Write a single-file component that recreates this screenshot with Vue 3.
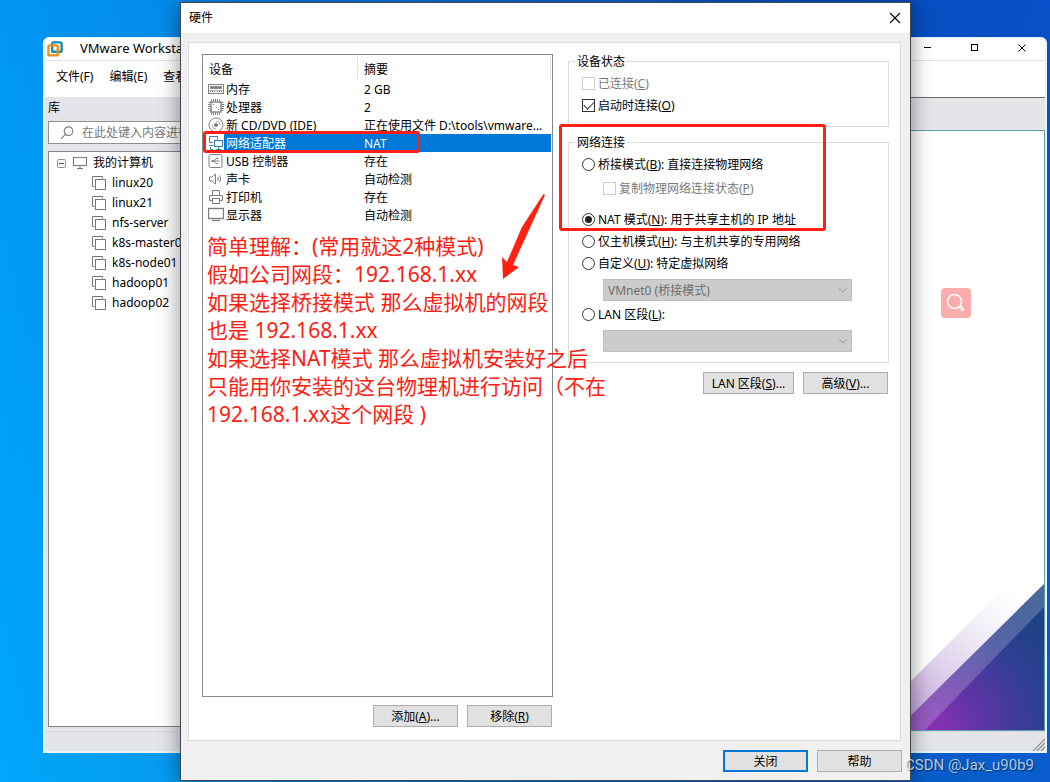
<script setup>
    import { ref } from 'vue';

    const menus = ref(['文件(F)', '编辑(E)', '查看(V)']);

    const machines = ref(['linux20', 'linux21', 'nfs-server', 'k8s-master01', 'k8s-node01', 'hadoop01', 'hadoop02']);

    const devices = ref([
        { icon: 'memory', name: '内存', summary: '2 GB' },
        { icon: 'cpu', name: '处理器', summary: '2' },
        { icon: 'disc', name: '新 CD/DVD (IDE)', summary: '正在使用文件 D:\\tools\\vmware...' },
        { icon: 'network', name: '网络适配器', summary: 'NAT' },
        { icon: 'usb', name: 'USB 控制器', summary: '存在' },
        { icon: 'sound', name: '声卡', summary: '自动检测' },
        { icon: 'printer', name: '打印机', summary: '存在' },
        { icon: 'display', name: '显示器', summary: '自动检测' },
    ]);
    const selected = ref('network');

    const connected = ref(false);
    const connectAtStart = ref(true);
    const replicate = ref(false);
    const mode = ref('nat');

    const notes = ref([
        '简单理解：(常用就这2种模式)',
        '假如公司网段：192.168.1.xx',
        '如果选择桥接模式 那么虚拟机的网段',
        '也是 192.168.1.xx',
        '如果选择NAT模式 那么虚拟机安装好之后',
        '只能用你安装的这台物理机进行访问（不在',
        '192.168.1.xx这个网段 )',
    ]);
</script>


<template>
    <div class="desktop">
        <section class="window">
            <header class="titlebar">
                <svg class="logo" width="16" height="16" viewBox="0 0 16 16" fill="none" stroke-width="2.4">
                    <rect x="5.2" y="1.4" width="9.4" height="9.4" rx="1.4" stroke="#0f8fb5" />
                    <rect x="1.4" y="4.4" width="9.4" height="10" rx="1.4" stroke="#f08c14" />
                    <path d="M5.2 8.4V10.8H8.4" stroke="#0f8fb5" stroke-width="1.6" />
                </svg>
                <h1>VMware Workstation</h1>
                <button type="button" class="ctl" aria-label="最小化">
                    <svg width="10" height="10" viewBox="0 0 10 10" stroke="#000"><path d="M1 4.5H8" /></svg>
                </button>
                <button type="button" class="ctl" aria-label="最大化">
                    <svg width="10" height="10" viewBox="0 0 10 10" stroke="#000" fill="none"><rect x="1.5" y="1.5" width="6" height="6" /></svg>
                </button>
                <button type="button" class="ctl" aria-label="关闭">
                    <svg width="10" height="10" viewBox="0 0 10 10" stroke="#000"><path d="M1.5 1.5L8.5 8.5M8.5 1.5L1.5 8.5" /></svg>
                </button>
            </header>
            <nav class="menubar">
                <button v-for="item in menus" :key="item" type="button">{{ item }}</button>
            </nav>
            <div class="body">
                <aside class="library">
                    <h2>库</h2>
                    <label class="search">
                        <svg width="14" height="14" viewBox="0 0 14 14" fill="none" stroke="#777" stroke-width="1.1">
                            <circle cx="8.5" cy="5.2" r="4.3" />
                            <path d="M5.4 8.4L1 12.8" />
                        </svg>
                        <input type="text" placeholder="在此处键入内容进行搜索" aria-label="搜索">
                    </label>
                    <ul class="tree">
                        <li class="root">
                            <svg width="9" height="9" viewBox="0 0 9 9" fill="#f6f6f6" stroke="#919191">
                                <rect x="0.5" y="0.5" width="8" height="8" rx="1" />
                                <path d="M2 4.5H7" stroke="#3a5a9a" />
                            </svg>
                            <svg width="14" height="12" viewBox="0 0 14 12" fill="none" stroke="#777">
                                <rect x="0.5" y="0.5" width="13" height="8" />
                                <path d="M7 9V11M4 11.5H10" />
                            </svg>
                            <span>我的计算机</span>
                        </li>
                        <li v-for="machine in machines" :key="machine">
                            <svg width="14" height="14" viewBox="0 0 14 14" fill="none" stroke="#777">
                                <path d="M2.5 10.5H0.5V0.5H10.5V2.5" />
                                <rect x="3.5" y="3.5" width="10" height="10" fill="#fff" />
                            </svg>
                            <span>{{ machine }}</span>
                        </li>
                    </ul>
                </aside>
                <main class="workspace">
                    <div class="page">
                        <svg class="art" width="160" height="200" viewBox="0 0 160 200">
                            <defs>
                                <radialGradient id="deep" gradientUnits="userSpaceOnUse" cx="48" cy="200" r="150">
                                    <stop offset="0" stop-color="#8a30b6" />
                                    <stop offset="0.35" stop-color="#5c35a5" />
                                    <stop offset="0.7" stop-color="#303e93" />
                                    <stop offset="1" stop-color="#1d4286" />
                                </radialGradient>
                                <linearGradient id="haze" gradientUnits="userSpaceOnUse" x1="20" y1="180" x2="130" y2="60">
                                    <stop offset="0" stop-color="#9a5cc0" stop-opacity="0.55" />
                                    <stop offset="0.5" stop-color="#a080c8" stop-opacity="0.25" />
                                    <stop offset="1" stop-color="#c0b0dc" stop-opacity="0" />
                                </linearGradient>
                            </defs>
                            <path d="M0 178L140 38L160 54L12 200H0Z" fill="url(#haze)" />
                            <path d="M160 54V200H12Z" fill="url(#deep)" />
                            <path d="M160 54V77L41 200H12Z" fill="#fff" fill-opacity="0.2" />
                        </svg>
                    </div>
                </main>
            </div>
            <footer class="statusbar">
                <svg width="12" height="12" viewBox="0 0 12 12" stroke="#8a8a8a" stroke-width="1.2">
                    <path d="M0 12L12 0M4 12L12 4M8 12L12 8" />
                </svg>
            </footer>
        </section>

        <button type="button" class="finder" aria-label="搜图">
            <svg width="20" height="20" viewBox="0 0 20 20" fill="none" stroke="#fff">
                <circle cx="8.5" cy="8.5" r="7" stroke-width="1.5" />
                <path d="M13.2 14.2L14.6 12.8L17.4 15.8A1.2 1.2 0 0 1 16 17.6Z" stroke-width="1.3" stroke-linejoin="round" />
            </svg>
        </button>

        <section class="dialog" role="dialog" aria-labelledby="dialog-title">
            <header class="dialog-head">
                <h2 id="dialog-title">硬件</h2>
                <button type="button" aria-label="关闭">
                    <svg width="12" height="12" viewBox="0 0 12 12" stroke="#000" stroke-width="1.1"><path d="M1 1L11 11M11 1L1 11" /></svg>
                </button>
            </header>

            <div class="panel">
                <div class="left">
                    <div class="list">
                        <table>
                            <thead>
                                <tr><th>设备</th><th>摘要</th></tr>
                            </thead>
                            <tbody>
                                <tr v-for="device in devices" :key="device.icon" :class="{ selected: device.icon === selected }" @click="selected = device.icon">
                                    <td>
                                        <div class="device">
                                            <svg width="16" height="16" viewBox="0 0 16 16" fill="none" stroke="#808080">
                                                <g v-if="device.icon === 'memory'">
                                                    <rect x="0.5" y="3.5" width="15" height="9" />
                                                    <path d="M2 10.5H7M9 10.5H14" stroke-dasharray="1 1" />
                                                    <path d="M2.5 5.5H5.5V7.5H2.5ZM6.5 5.5H9.5V7.5H6.5ZM10.5 5.5H13.5V7.5H10.5Z" fill="#808080" />
                                                    <path d="M1 9.5H15" stroke="#b0b0b0" />
                                                </g>
                                                <g v-else-if="device.icon === 'cpu'">
                                                    <rect x="3" y="3" width="10" height="10" stroke-width="1.4" />
                                                    <path d="M3.5 0.5V2.5M5.5 0V2.5M7.5 0V2.5M9.5 0V2.5M11.5 0.5V2.5M3.5 13.5V15.5M5.5 13.5V16M7.5 13.5V16M9.5 13.5V16M11.5 13.5V15.5M0.5 3.5H2.5M0 5.5H2.5M0 7.5H2.5M0 9.5H2.5M0.5 11.5H2.5M13.5 3.5H15.5M13.5 5.5H16M13.5 7.5H16M13.5 9.5H16M13.5 11.5H15.5" />
                                                    <path d="M5 5.5H6M10 10.5H11M8 8.5H9" />
                                                </g>
                                                <g v-else-if="device.icon === 'disc'">
                                                    <circle cx="8" cy="8" r="7" />
                                                    <circle cx="8" cy="8" r="1.6" fill="#808080" />
                                                    <path d="M8 4A4 4 0 0 1 12 8M4 8A4 4 0 0 0 8 12" stroke="#b0b0b0" />
                                                </g>
                                                <g v-else-if="device.icon === 'network'" stroke="#3c7ea8">
                                                    <path d="M5 7.5H1.5V1.5H9.5V4.5M1 10.5H5" />
                                                    <rect x="6.5" y="5.5" width="8" height="6" fill="#fff" />
                                                    <path d="M10.5 12V14M7.5 14.5H13.5M2.5 12V14.5H5" />
                                                </g>
                                                <g v-else-if="device.icon === 'usb'">
                                                    <rect x="1" y="1.5" width="13" height="13" rx="1.5" />
                                                    <path d="M4 8H11.5M6 8L8 5.5H10M6 8L8 10.5H10" />
                                                    <circle cx="4.5" cy="8" r="1.2" fill="#808080" stroke="none" />
                                                </g>
                                                <g v-else-if="device.icon === 'sound'">
                                                    <path d="M1.5 6H4L7.5 3V13L4 10H1.5Z" />
                                                    <path d="M9.5 6Q11 8 9.5 10M11.5 4.5Q14 8 11.5 11.5" />
                                                </g>
                                                <g v-else-if="device.icon === 'printer'">
                                                    <path d="M4.5 6V1.5H11.5V6M4.5 11.5H1.5V6.5H14.5V11.5H11.5" />
                                                    <rect x="4.5" y="9.5" width="7" height="5" />
                                                </g>
                                                <g v-else>
                                                    <rect x="0.5" y="1.5" width="15" height="10" stroke-width="1.4" />
                                                    <path d="M4 13.5H12" stroke-width="1.4" />
                                                </g>
                                            </svg>
                                            <span>{{ device.name }}</span>
                                        </div>
                                    </td>
                                    <td>{{ device.summary }}</td>
                                </tr>
                            </tbody>
                        </table>
                        <div class="mark mark-row"></div>
                        <div class="notes">
                            <p v-for="line in notes" :key="line">{{ line }}</p>
                        </div>
                        <svg class="arrow" width="46" height="88" viewBox="0 0 46 88" fill="#fe2011">
                            <path d="M45 2L43.500 1L22 34L7 69L2 64L3 86L19 74L13 72L29 37Z" />
                        </svg>
                    </div>
                    <div class="buttons">
                        <button type="button" class="btn">添加(<u>A</u>)...</button>
                        <button type="button" class="btn">移除(<u>R</u>)</button>
                    </div>
                </div>

                <div class="right">
                    <fieldset class="status">
                        <legend>设备状态</legend>
                        <label class="off"><input v-model="connected" type="checkbox" disabled><span>已连接(<u>C</u>)</span></label>
                        <label><input v-model="connectAtStart" type="checkbox"><span>启动时连接(<u>O</u>)</span></label>
                    </fieldset>
                    <fieldset class="network">
                        <legend>网络连接</legend>
                        <label><input v-model="mode" type="radio" value="bridged"><span>桥接模式(<u>B</u>): 直接连接物理网络</span></label>
                        <label class="off sub"><input v-model="replicate" type="checkbox" disabled><span>复制物理网络连接状态(<u>P</u>)</span></label>
                        <label><input v-model="mode" type="radio" value="nat"><span>NAT 模式(<u>N</u>): 用于共享主机的 IP 地址</span></label>
                        <label><input v-model="mode" type="radio" value="host"><span>仅主机模式(<u>H</u>): 与主机共享的专用网络</span></label>
                        <label><input v-model="mode" type="radio" value="custom"><span>自定义(<u>U</u>): 特定虚拟网络</span></label>
                        <div class="select">
                            <select disabled aria-label="特定虚拟网络"><option>VMnet0 (桥接模式)</option></select>
                            <svg width="10" height="6" viewBox="0 0 10 6" fill="none" stroke="#999"><path d="M1 1L5 5L9 1" /></svg>
                        </div>
                        <label class="lan"><input v-model="mode" type="radio" value="lan"><span>LAN 区段(<u>L</u>):</span></label>
                        <div class="select">
                            <select disabled aria-label="LAN 区段"><option></option></select>
                            <svg width="10" height="6" viewBox="0 0 10 6" fill="none" stroke="#999"><path d="M1 1L5 5L9 1" /></svg>
                        </div>
                    </fieldset>
                    <div class="buttons">
                        <button type="button" class="btn wide">LAN 区段(<u>S</u>)...</button>
                        <button type="button" class="btn">高级(<u>V</u>)...</button>
                    </div>
                    <div class="mark mark-network"></div>
                </div>
            </div>

            <footer class="dialog-foot">
                <button type="button" class="btn primary">关闭</button>
                <button type="button" class="btn">帮助</button>
            </footer>
        </section>

        <p class="watermark">CSDN @Jax_u90b9</p>
    </div>
</template>

<style>
body {
    margin: 0;
}
</style>

<style scoped>
* {
    box-sizing: border-box;
    margin: 0;
    padding: 0;
}

.desktop {
    position: relative;
    min-height: 100vh;
    overflow: hidden;
    background:
        linear-gradient(180deg, rgba(0, 70, 200, 0.14), rgba(0, 190, 255, 0.12)),
        linear-gradient(90deg, #00a4fa 0%, #0a88e6 30%, #0c66d0 60%, #074fc0 88%, #0a50c8 100%);
    color: #000;
    font: 12px/18px "Noto Sans", "Noto Sans CJK SC", sans-serif;
}

button {
    border: 0;
    background: none;
    color: inherit;
    font: inherit;
}

h1,
h2 {
    font-size: 12px;
    font-weight: normal;
}

/* main window */
.window {
    position: absolute;
    top: 37px;
    right: 3px;
    bottom: 29px;
    left: 43px;
    display: flex;
    flex-direction: column;
    overflow: hidden;
    border: solid #eaf5fa;
    border-width: 1px 2px;
    border-radius: 6px 6px 0 0;
    background: #e4e5e8;
}

.titlebar {
    display: flex;
    align-items: center;
    height: 23px;
    padding-left: 2px;
    border-bottom: 1px solid #e5e5e5;
    background: #fff;
}

.titlebar h1 {
    flex: 1;
    padding: 0 0 2px 17px;
    font-size: 13px;
}

.ctl {
    width: 47px;
    height: 20px;
}

.menubar {
    display: flex;
    gap: 16px;
    height: 36px;
    padding: 0 11px 5px;
    background: #fff;
}

.body {
    display: grid;
    flex: 1;
    grid-template-columns: 240px 1fr;
}

.library {
    display: flex;
    flex-direction: column;
    padding: 2px 0 4px 3px;
}

.library h2 {
    padding-bottom: 4px;
}

.search {
    display: flex;
    gap: 8px;
    align-items: center;
    height: 23px;
    padding-left: 11px;
    border: 1px solid #8f8f94;
    background: #fff;
}

.search input {
    flex: 1;
    border: 0;
    outline: 0;
    font: inherit;
}

.search input::placeholder {
    color: #777;
    opacity: 1;
}

.tree {
    flex: 1;
    margin-top: 7px;
    padding-top: 1px;
    border: 1px solid #82828c;
    background: #fff;
    list-style: none;
}

.tree li {
    display: flex;
    gap: 6px;
    align-items: center;
    height: 20px;
    padding-left: 43px;
}

.tree .root {
    padding-left: 8px;
}

.tree .root svg + svg {
    margin-left: 1px;
}

.workspace {
    display: flex;
    padding-top: 32px;
    border-top: 1px solid #6b6b6b;
}

.page {
    display: flex;
    flex: 1;
    align-items: flex-end;
    justify-content: flex-end;
    border: 1px solid #5d9ab4;
    background: #fff;
}

.art {
    display: block;
}

.statusbar {
    display: flex;
    align-items: flex-end;
    justify-content: flex-end;
    height: 21px;
    border-top: 1px solid #d8dade;
    border-bottom: 1px solid #eaf5fa;
}

.finder {
    position: absolute;
    top: 288px;
    right: 79px;
    display: grid;
    place-items: center;
    width: 30px;
    height: 30px;
    border-radius: 4px;
    background: #f9adad;
}

/* hardware dialog */
.dialog {
    position: absolute;
    top: 2px;
    right: 139px;
    bottom: 1px;
    left: 180px;
    display: flex;
    flex-direction: column;
    border: 1px solid #3c4a58;
    background: #f0f0f0;
    box-shadow: 0 2px 20px rgba(0, 0, 0, 0.45);
}

.dialog-head {
    display: flex;
    align-items: center;
    justify-content: space-between;
    height: 30px;
    padding: 0 9px 0 8px;
    background: #fff;
}

.dialog-head button,
.dialog-head svg {
    display: block;
}

.panel {
    display: grid;
    flex: 1;
    grid-template-columns: 1fr 321px;
    gap: 15px;
    margin: 9px 9px 0 7px;
    padding: 11px 11px 13px 13px;
    border: 1px solid #dcdcdc;
    background: #fff;
}

.left {
    display: flex;
    flex-direction: column;
}

.list {
    position: relative;
    z-index: 1;
    flex: 1;
    padding-right: 1px;
    border: 1px solid #828790;
}

table {
    width: 100%;
    border-spacing: 0;
    table-layout: fixed;
}

th {
    height: 25px;
    padding: 4px 6px 0;
    border-right: 1px solid #e5e5e5;
    font-weight: normal;
    text-align: left;
}

th:first-child {
    width: 155px;
}

td {
    height: 18px;
    padding: 2px 6px 0;
    line-height: 16px;
    white-space: nowrap;
}

td:first-child {
    padding: 0 0 0 5px;
}

.device {
    display: flex;
    align-items: center;
    height: 18px;
}

.device span {
    flex: 1;
    padding: 2px 0 0 2px;
}

.selected td:last-child,
.selected span {
    background: #0078d7;
    color: #fff;
}

.mark {
    position: absolute;
    border: 3px solid #fe2011;
    border-radius: 3px;
    pointer-events: none;
}

.mark-row {
    top: 76px;
    left: 0;
    width: 217px;
    height: 22px;
}

.mark-network {
    top: 70px;
    left: -9px;
    width: 267px;
    height: 107px;
}

.notes {
    position: absolute;
    top: 177px;
    left: 4px;
    color: #fe2011;
    font-size: 21px;
    line-height: 28px;
    white-space: nowrap;
}

.arrow {
    position: absolute;
    top: 138px;
    left: 297px;
}

.buttons {
    display: flex;
    gap: 9px;
    justify-content: flex-end;
    margin-top: 8px;
    padding-right: 1px;
}

.btn {
    width: 85px;
    height: 22px;
    padding-top: 1px;
    border: 1px solid #adadad;
    background: #e1e1e1;
    line-height: 18px;
    white-space: nowrap;
}

.btn.wide {
    width: 91px;
}

.btn.primary {
    border: 2px solid #0078d7;
}

.right {
    position: relative;
}

fieldset {
    min-width: 0;
    padding: 5px 13px 9px;
    border: 1px solid #dcdcdc;
}

legend {
    height: 14px;
    margin-left: -7px;
    padding: 0 2px;
    line-height: 16px;
}

.network {
    margin-top: 8px;
    padding-bottom: 10px;
}

.right .buttons {
    margin-top: 9px;
}

fieldset label {
    display: flex;
    gap: 3px;
    align-items: center;
    height: 22px;
    white-space: nowrap;
}

.off {
    color: #7a7a7a;
}

.sub {
    margin: 2px 0 9px 21px;
}

.lan {
    margin-top: 3px;
}

fieldset input {
    display: grid;
    place-items: center;
    width: 13px;
    height: 13px;
    margin-bottom: 2px;
    border: 1px solid #333;
    background: #fff;
    appearance: none;
}

fieldset input:disabled {
    border-color: #ccc;
}

input[type='radio'] {
    border-radius: 50%;
}

input[type='radio']:checked::after {
    content: '';
    width: 7px;
    height: 7px;
    border-radius: 50%;
    background: #222;
}

input[type='checkbox']:checked::after {
    content: '';
    width: 9px;
    height: 5px;
    margin-bottom: 3px;
    border: solid #333;
    border-width: 0 0 1px 1px;
    transform: rotate(-45deg);
}

.select {
    display: grid;
    align-items: center;
    margin: 4px 23px 0 21px;
}

.select select,
.select svg {
    grid-area: 1 / 1;
}

.select select {
    width: 100%;
    height: 22px;
    padding: 1px 4px 0;
    border: 1px solid #bfbfbf;
    border-radius: 0;
    background: #ccc;
    color: #6d6d6d;
    font: inherit;
    opacity: 1;
    appearance: none;
}

.select svg {
    justify-self: end;
    margin-right: 4px;
}

.dialog-foot {
    display: flex;
    gap: 9px;
    justify-content: flex-end;
    padding: 9px 8px 8px;
}

.watermark {
    position: absolute;
    right: 16px;
    bottom: 8px;
    color: rgba(255, 255, 255, 0.7);
    font: 15px/18px Roboto, sans-serif;
    text-shadow: 1px 1px 1px rgba(0, 0, 0, 0.5);
}
</style>
